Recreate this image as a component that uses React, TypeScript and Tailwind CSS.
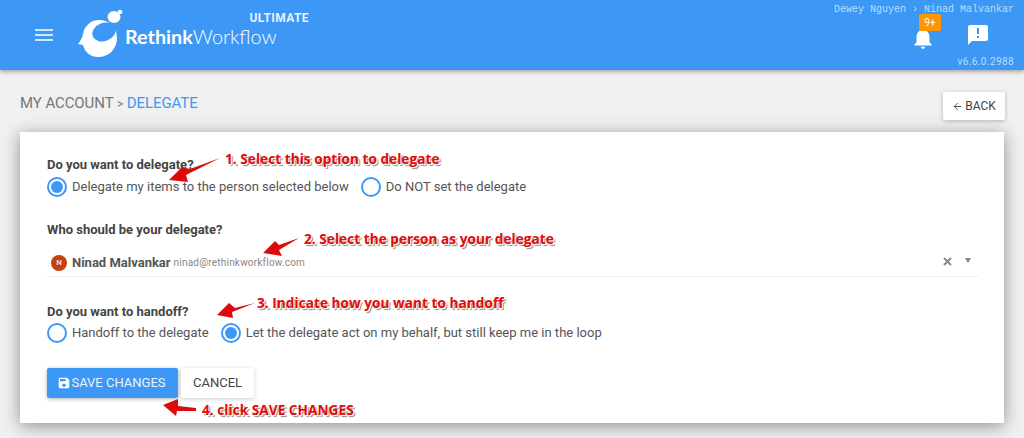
import { ArrowLeft } from "lucide-react";

const roboto = { fontFamily: "Roboto, sans-serif" };

function Radio({ checked, label }: { checked?: boolean; label: string }) {
  return (
    <label className="flex items-center gap-[5px]">
      <span className="flex h-[20px] w-[20px] items-center justify-center rounded-full border-2 border-[#3d98f5] bg-white">
        {checked && <span className="h-[12px] w-[12px] rounded-full bg-[#3d98f5]" />}
      </span>
      <span className="text-[13px] text-[#555]">{label}</span>
    </label>
  );
}

function Note({ className, children }: { className: string; children: string }) {
  return (
    <span
      className={`absolute whitespace-nowrap font-['Open_Sans',sans-serif] text-[13.7px] leading-[18px] font-bold text-[#e30b0b] [text-shadow:1px_1px_0_#fff,2px_2px_1px_#888] ${className}`}
    >
      {children}
    </span>
  );
}

function Arrows() {
  return (
    <svg className="absolute top-0 left-0" width="1024" height="438" fill="#dc0a0a">
      <path d="M220 158 L190 169 L182 167 L169 180 L188 182 L186 175 Z" />
      <path d="M299 238 L279 245 L275 241 L263 253 L282 256 L279 250 Z" />
      <path d="M255 303 L235 308 L229 303 L217 315 L233 318 L232 312 Z" />
      <path d="M196 408 L178 406 L178 399 L163 405 L176 416 L177 411 L196 411 Z" />
    </svg>
  );
}

function Logo() {
  return (
    <div className="flex items-start">
      <svg width="48" height="50" viewBox="0 0 48 50" className="mt-[9px] shrink-0">
        <path
          d="M21 11C32 11 39 19 39 29C39 40 31 48 20 48C13 48 7 44 5 36L0 35C4 30 5 26 6 21C9 15 14 11 21 11Z"
          fill="#fff"
        />
        <ellipse cx="26" cy="23" rx="12" ry="9" transform="rotate(-20 26 23)" fill="#3d98f5" />
        <ellipse cx="36" cy="8" rx="6.500" ry="6" fill="#fff" />
        <circle cx="42" cy="3" r="2.300" fill="#fff" />
      </svg>
      <span className="mt-[24px] -ml-[1px] font-['Lato',sans-serif] text-[19.800px] leading-[24px] text-white">
        <span className="font-bold">Rethink</span>
        <span className="font-light">Workflow</span>
      </span>
      <span className="mt-[11px] -ml-[27px] text-[12px] leading-[14px] font-bold tracking-[0.4px] text-[#e5f1fd]">ULTIMATE</span>
    </div>
  );
}

function Header() {
  return (
    <header className="relative z-10 flex h-[70px] items-start justify-between bg-[#3d98f5] shadow-[0_2px_4px_rgba(0,0,0,0.3)]">
      <div className="flex items-start pl-[32px]">
        <svg width="24" height="24" viewBox="0 0 24 24" stroke="#fff" strokeWidth="1.700" className="mt-[23px] mr-[22px]">
          <path d="M3 7h18M3 12h18M3 17h18" />
        </svg>
        <Logo />
      </div>
      <div className="flex flex-col items-end pr-[10px]">
        <div className="mt-[4px] font-['Liberation_Mono',monospace] text-[10px] leading-[11px] text-[#bbdcfb]">
          Dewey Nguyen › Ninad Malvankar
        </div>
        <div className="relative -mt-[1px] mr-[24px] flex items-start gap-[30px]">
          <svg width="26" height="26" viewBox="0 0 24 24" fill="#fff" className="mt-[11px]">
            <path d="M12 22c1.100 0 2-.9 2-2h-4c0 1.100.9 2 2 2zm6-6v-5c0-3.100-1.600-5.600-4.500-6.300V4c0-.8-.7-1.500-1.500-1.500s-1.500.7-1.500 1.500v.7C7.600 5.400 6 7.900 6 11v5l-2 2v1h16v-1l-2-2z" />
          </svg>
          <span className="absolute top-0 left-[9px] flex h-[17px] w-[22px] items-center justify-center rounded-[2px] bg-[#ff9800] text-[10px] text-white">
            9+
          </span>
          <svg width="24" height="24" viewBox="0 0 24 24" fill="#fff" className="mt-[9px]">
            <path d="M20 2H4c-1.100 0-2 .9-2 2v18l4-4h14c1.100 0 2-.9 2-2V4c0-1.100-.9-2-2-2zm-7 9h-2V5h2v6zm0 4h-2v-2h2v2z" />
          </svg>
        </div>
        <div className="mt-[4px] text-[10px] leading-[13px] tracking-[0.4px] text-[#bbdcfb]">v6.6.0.2988</div>
      </div>
    </header>
  );
}

export default function App() {
  return (
    <div className="relative h-[438px] w-[1024px] overflow-hidden bg-[#f0f0f0]" style={roboto}>
      <Header />
      <div className="flex items-start justify-between pt-[22px] pr-[19px] pl-[20px]">
        <div className="pt-[1px] text-[15px] leading-[20px] tracking-[-0.08px] text-[#777]">
          MY ACCOUNT <span className="text-[12px]">&gt;</span> <span className="text-[#3d98f5]">DELEGATE</span>
        </div>
        <button className="flex h-[28px] w-[62px] items-center justify-center gap-[2px] rounded-[2px] bg-white text-[12px] text-[#444] shadow-[0_1px_4px_rgba(0,0,0,0.25)]">
          <ArrowLeft size={11} />
          BACK
        </button>
      </div>
      <main className="mx-[20px] mt-[12px] h-[291px] w-[984px] bg-white px-[27px] pt-[25px] shadow-[0_3px_16px_rgba(0,0,0,0.4)]">
        <h2 className="text-[13px] leading-[16px] font-bold text-[#444]">Do you want to delegate?</h2>
        <div className="mt-[4px] flex gap-[12px]">
          <Radio checked label="Delegate my items to the person selected below" />
          <Radio label="Do NOT set the delegate" />
        </div>
        <h2 className="mt-[25px] text-[13px] leading-[16px] font-bold text-[#444]">Who should be your delegate?</h2>
        <div className="mt-[7px] flex h-[32px] w-[931px] items-center border-b border-[#eee] pt-[4px] pl-[4px]">
          <span className="flex h-[16px] w-[16px] items-center justify-center rounded-full bg-[#c2410c] text-[8px] font-bold text-[#f4d9cc]">N</span>
          <span className="ml-[5px] text-[13px] font-bold text-[#555]">Ninad Malvankar</span>
          <span className="ml-[3px] text-[10px] tracking-[0.2px] text-[#888]">ninad@rethinkworkflow.com</span>
          <svg width="9" height="9" viewBox="0 0 9 9" className="mb-[2px] ml-auto" stroke="#888" strokeWidth="2">
            <path d="M1 1L8 8M8 1L1 8" />
          </svg>
          <span className="mr-[7px] mb-[4px] ml-[13px] h-0 w-0 border-x-[3.500px] border-t-[5px] border-x-transparent border-t-[#888]" />
        </div>
        <h2 className="mt-[27px] text-[13px] leading-[16px] font-bold text-[#444]">Do you want to handoff?</h2>
        <div className="mt-[3px] flex gap-[12px]">
          <Radio label="Handoff to the delegate" />
          <Radio checked label="Let the delegate act on my behalf, but still keep me in the loop" />
        </div>
        <div className="mt-[25px] flex gap-[3px]">
          <button className="flex h-[30px] w-[131px] items-center justify-center rounded-[2px] bg-[#3d98f5] pr-[2px] text-[13px] text-[#e8f3fe] shadow-[0_1px_4px_rgba(0,0,0,0.3)]">
            <svg width="14" height="14" viewBox="0 0 24 24" fill="#fff">
              <path d="M17 3H5c-1.110 0-2 .9-2 2v14c0 1.100.89 2 2 2h14c1.100 0 2-.9 2-2V7l-4-4zm-5 16c-1.660 0-3-1.340-3-3s1.340-3 3-3 3 1.340 3 3-1.340 3-3 3zm3-10H5V5h10v4z" />
            </svg>
            SAVE CHANGES
          </button>
          <button className="h-[30px] w-[73px] rounded-[2px] bg-white text-[13px] text-[#444] shadow-[0_1px_4px_rgba(0,0,0,0.2)]">CANCEL</button>
        </div>
      </main>
      <Arrows />
      <Note className="top-[150px] left-[225px]">1. Select this option to delegate</Note>
      <Note className="top-[230px] left-[304px]">2. Select the person as your delegate</Note>
      <Note className="top-[294px] left-[257px]">3. Indicate how you want to handoff</Note>
      <Note className="top-[401px] left-[202px]">4. click SAVE CHANGES</Note>
    </div>
  );
}
